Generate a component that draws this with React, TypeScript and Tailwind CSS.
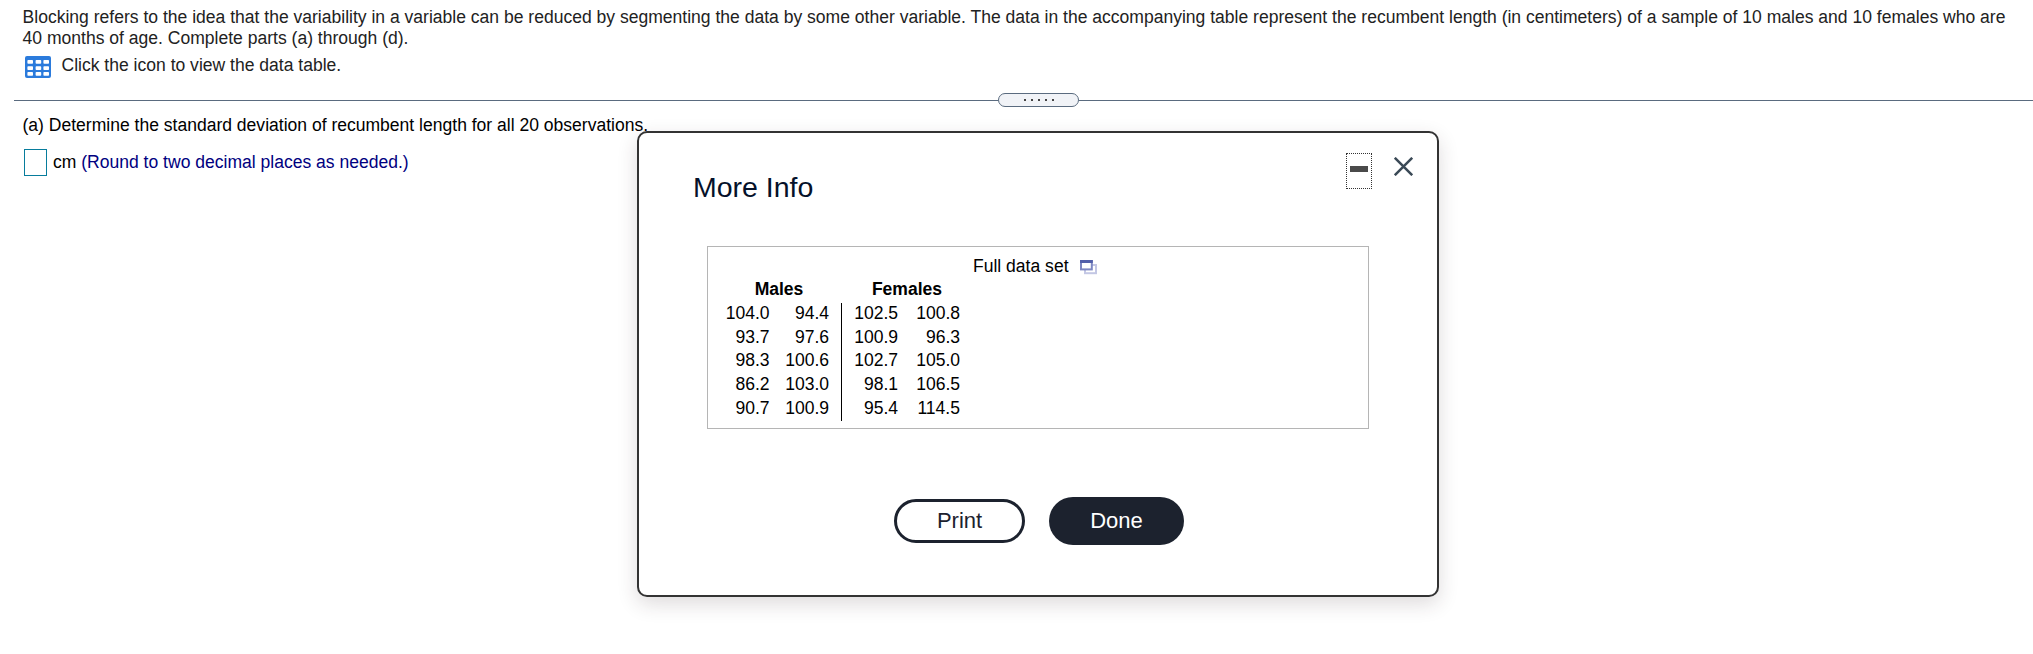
const rows = [
  ["104.0", "94.4", "102.5", "100.8"],
  ["93.7", "97.6", "100.9", "96.3"],
  ["98.3", "100.6", "102.7", "105.0"],
  ["86.2", "103.0", "98.1", "106.5"],
  ["90.7", "100.9", "95.4", "114.5"],
];

function TableIcon() {
  return (
    <svg width="26" height="22" viewBox="0 0 26 22" aria-hidden="true">
      <rect width="26" height="22" rx="2" fill="#2b7bdc" />
      {[4, 10.2, 16].map((y) =>
        [2.4, 10.6, 18.4].map((x) => (
          <rect key={`${x}-${y}`} x={x} y={y} width="5.6" height="3.8" rx="0.8" fill="#fff" />
        ))
      )}
    </svg>
  );
}

function WindowsIcon() {
  return (
    <svg width="17" height="15" viewBox="0 0 17 15" aria-hidden="true">
      <rect x="5" y="5" width="11" height="8.2" fill="#fff" stroke="#c3c7e4" strokeWidth="2" />
      <rect x="1" y="1" width="10.8" height="8.4" fill="#fff" stroke="#7d87c2" strokeWidth="2" />
      <path d="M0 1.5h12.8" stroke="#5360aa" strokeWidth="3" />
    </svg>
  );
}

function Dialog() {
  return (
    <div
      role="dialog"
      className="absolute left-[637px] top-[131px] flex h-[466px] w-[802px] flex-col rounded-[10px] border-2 border-[#333] bg-white shadow-[0_7px_20px_rgba(50,30,40,0.16)]"
    >
      <div className="flex h-[113px] justify-between pl-[54px] pr-[24px]">
        <h2 className="pt-[36px] text-[28.5px] leading-[36px] text-[#05112a]">More Info</h2>
        <div className="flex items-start pt-5">
          <button aria-label="Minimize" className="flex h-9 w-[26px] justify-center border border-dotted border-[#333] pt-3">
            <span className="h-1.5 w-[18px] bg-[#4a4a4a]" />
          </button>
          <button aria-label="Close" className="ml-[22px] mt-1">
            <svg width="19" height="19" viewBox="0 0 19 19" fill="none" stroke="#3a4956" strokeWidth="2.5">
              <path d="M.8.8l17.4 17.4M18.2.8.8 18.2" />
            </svg>
          </button>
        </div>
      </div>

      <div className="ml-[68px] h-[183px] w-[662px] border border-[#b5b5b5] text-[17.55px] text-black">
        <div className="flex h-[31px] items-center pl-[265px] pt-1.5 leading-[22px]">
          <span>Full data set</span>
          <span className="ml-[11px] mt-[3px]">
            <WindowsIcon />
          </span>
        </div>
        <div className="flex h-[25px] items-center pb-0.5 font-bold">
          <span className="w-[142px] text-center">Males</span>
          <span className="w-[114px] text-center">Females</span>
        </div>
        <div className="flex flex-col">
          {rows.map((r) => (
            <div key={r[0]} className="flex h-[23.7px] text-right leading-[21.6px]">
              <span className="w-[61.5px]">{r[0]}</span>
              <span className="w-[59.5px]">{r[1]}</span>
              <span className="ml-[12px] h-full w-px bg-black" />
              <span className="w-[56px]">{r[2]}</span>
              <span className="w-[62px]">{r[3]}</span>
            </div>
          ))}
        </div>
      </div>

      <div className="mt-[68px] flex items-center gap-6 pl-[255px] text-[22px]">
        <button className="h-11 w-[131px] rounded-full border-[3px] border-[#1c222e] pb-px text-[#1c222e]">Print</button>
        <button className="h-12 w-[135px] rounded-full bg-[#1c222e] pb-px text-white">Done</button>
      </div>
    </div>
  );
}

export default function App() {
  return (
    <div className="relative h-[654px] w-[2033px] overflow-hidden bg-white font-['Liberation_Sans',Arial,sans-serif] text-[17.55px]">
      <p className="whitespace-nowrap pl-[22.6px] pt-[6.5px] leading-[21px] text-[#222]">
        Blocking refers to the idea that the variability in a variable can be reduced by segmenting the data by some other
        variable. The data in the accompanying table represent the recumbent length (in centimeters) of a sample of 10
        males and 10 females who are
        <br />
        40 months of age. Complete parts (a) through (d).
      </p>
      <div className="flex h-[30.5px] pl-[25px] text-[#222]">
        <span className="pt-[7px]">
          <TableIcon />
        </span>
        <span className="pl-[10.5px] pt-[5px] leading-[22px]">Click the icon to view the data table.</span>
      </div>
      <div className="mt-[14px] flex h-[14px] pl-[14px]">
        <span className="mt-[7px] h-px w-[984px] bg-[#5a6b7f]" />
        <span className="flex h-[14px] w-[81px] items-center justify-center gap-[5px] rounded-full border border-[#5a6b7f] bg-[#f1f3f7]">
          {[0, 1, 2, 3, 4].map((i) => (
            <i key={i} className="size-0.5 bg-[#444]" />
          ))}
        </span>
        <span className="mt-[7px] h-px flex-1 bg-[#5a6b7f]" />
      </div>
      <p className="pl-[22.5px] pt-[7px] leading-[22px] text-black">
        (a) Determine the standard deviation of recumbent length for all 20 observations.
      </p>
      <div className="mt-[13px] flex pl-6">
        <input aria-label="Answer in cm" className="h-[27px] w-[23px] border border-[#077c9c]" />
        <span className="pl-1.5 leading-[26px] text-black">
          cm <span className="text-[#000080]">(Round to two decimal places as needed.)</span>
        </span>
      </div>
      <Dialog />
    </div>
  );
}
